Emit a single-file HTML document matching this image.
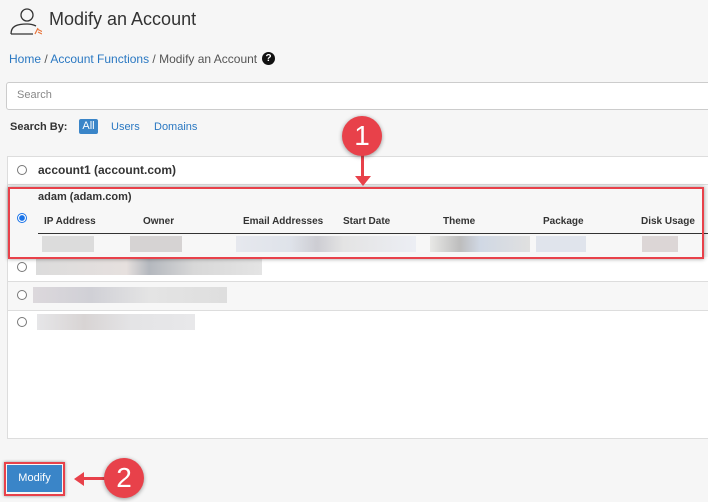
<!DOCTYPE html>
<html><head><style>
body{margin:0;width:708px;height:502px;background:#f6f6f6;font-family:"Liberation Sans",sans-serif;position:relative;overflow:hidden}
.a{position:absolute}
.t{color:#333}
a{color:#2a78c2;text-decoration:none}
.rad{position:absolute;width:8px;height:8px;border:1px solid #777;border-radius:50%;background:#fff}
.b{position:absolute;height:16px}
</style></head><body>
<svg class="a" style="left:8px;top:6px" width="34" height="30" viewBox="0 0 34 30"><circle cx="19" cy="9" r="6" fill="none" stroke="#333" stroke-width="1.3"/><path d="M3 28 C3 20 9 18 19 18 C24 18 26 19 28 20" fill="none" stroke="#333" stroke-width="1.3"/><path d="M3 28 H25" stroke="#333" stroke-width="1.3"/><path d="M29 23 l6 3 M30 26 l4 2 M27 28 l3 -6" stroke="#e8743b" stroke-width="1.2" fill="none"/></svg>
<div class="a t" style="left:49px;top:9px;font-size:18px">Modify an Account</div>
<div class="a" style="left:9px;top:52px;font-size:12px;color:#555"><a>Home</a> / <a>Account Functions</a> / Modify an Account</div>
<div class="a" style="left:262px;top:52px;width:13px;height:13px;border-radius:50%;background:#111;color:#fff;font-size:10px;font-weight:bold;text-align:center;line-height:13px">?</div>
<div class="a" style="left:6px;top:82px;width:710px;height:26px;background:#fff;border:1px solid #ccc;border-radius:3px"></div>
<div class="a" style="left:17px;top:89px;font-size:11px;color:#888">Search</div>
<div class="a t" style="left:10px;top:121px;font-size:11px;font-weight:bold">Search By:</div>
<div class="a" style="left:79px;top:119px;width:19px;height:15px;background:#3a85c8;border-radius:2px;color:#fff;font-size:11px;text-align:center;line-height:15px">All</div>
<div class="a" style="left:111px;top:121px;font-size:11px"><a>Users</a></div>
<div class="a" style="left:154px;top:121px;font-size:11px"><a>Domains</a></div>
<div class="a" style="left:7px;top:156px;width:702px;height:281px;background:#fff;border:1px solid #ddd"></div>
<div class="a" style="left:8px;top:184px;width:700px;height:72px;background:#f7f7f7;border-top:1px solid #ddd"></div>
<div class="a" style="left:8px;top:281px;width:700px;height:28px;background:#f7f7f7;border-top:1px solid #ddd;border-bottom:1px solid #ddd"></div>
<div class="rad" style="left:17px;top:165px"></div>
<div class="a t" style="left:38px;top:163px;font-size:12px;font-weight:bold">account1 (account.com)</div>
<div class="a t" style="left:38px;top:191px;font-size:11px;font-weight:bold">adam (adam.com)</div>
<div class="a" style="left:17px;top:213px;width:8px;height:8px;border:1px solid #1a73e8;border-radius:50%;background:radial-gradient(#1a73e8 45%,#fff 55%)"></div>
<div class="a t" style="left:38px;top:216px;width:670px;height:17px;border-bottom:1px solid #333;font-size:10px;font-weight:bold">
<span class="a" style="left:6px">IP Address</span><span class="a" style="left:105px">Owner</span><span class="a" style="left:205px">Email Addresses</span><span class="a" style="left:305px">Start Date</span><span class="a" style="left:405px">Theme</span><span class="a" style="left:505px">Package</span><span class="a" style="left:603px">Disk Usage</span></div>
<div class="b" style="left:42px;top:236px;width:52px;background:#dcdcdc"></div>
<div class="b" style="left:130px;top:236px;width:52px;background:#d6d3d3"></div>
<div class="b" style="left:236px;top:236px;width:180px;background:linear-gradient(90deg,#e6e8ee,#dfe3ea 30%,#cdcdd3 45%,#e4e4e4 60%,#eceef4)"></div>
<div class="b" style="left:430px;top:236px;width:100px;background:linear-gradient(90deg,#e8e8e6,#bdbdbd 30%,#d0d8e4 50%,#e0e0e0)"></div>
<div class="b" style="left:536px;top:236px;width:50px;background:#e0e4ec"></div>
<div class="b" style="left:642px;top:236px;width:36px;background:#dcd6d6"></div>
<div class="rad" style="left:17px;top:262px"></div>
<div class="b" style="left:36px;top:259px;width:226px;background:linear-gradient(90deg,#dcdcdc,#e6e0de 40%,#b4b8be 50%,#d8d8d8 70%,#e4e4e4)"></div>
<div class="rad" style="left:17px;top:290px"></div>
<div class="b" style="left:33px;top:287px;width:194px;background:linear-gradient(90deg,#dcd8dc,#d0d0d6 30%,#e4e4e4 60%,#dedede)"></div>
<div class="rad" style="left:17px;top:317px"></div>
<div class="b" style="left:37px;top:314px;width:158px;background:linear-gradient(90deg,#e6e6e8,#d8d4d4 30%,#e4e4e6 60%,#e8e8ea)"></div>
<div class="a" style="left:8px;top:187px;width:692px;height:68px;border:2px solid #e8414a;box-shadow:0 0 4px rgba(0,0,0,.4)"></div>
<div class="a" style="left:361px;top:154px;width:3px;height:24px;background:#e8414a"></div>
<div class="a" style="left:355px;top:176px;width:0;height:0;border-left:8px solid transparent;border-right:8px solid transparent;border-top:10px solid #e8414a"></div>
<div class="a" style="left:342px;top:116px;width:40px;height:40px;border-radius:50%;background:#e8414a;color:#fff;font-size:28px;text-align:center;line-height:40px;box-shadow:0 1px 4px rgba(0,0,0,.4)">1</div>
<div class="a" style="left:4px;top:462px;width:57px;height:30px;border:2px solid #e8414a;box-shadow:0 0 3px rgba(0,0,0,.4)"></div>
<div class="a" style="left:7px;top:465px;width:55px;height:27px;background:#3a85c8;color:#fff;font-size:11px;text-align:center;line-height:27px">Modify</div>
<div class="a" style="left:74px;top:472px;width:0;height:0;border-top:7px solid transparent;border-bottom:7px solid transparent;border-right:10px solid #e8414a"></div>
<div class="a" style="left:82px;top:477px;width:24px;height:3px;background:#e8414a"></div>
<div class="a" style="left:104px;top:458px;width:40px;height:40px;border-radius:50%;background:#e8414a;color:#fff;font-size:28px;text-align:center;line-height:40px;box-shadow:0 1px 4px rgba(0,0,0,.4)">2</div>
</body></html>
